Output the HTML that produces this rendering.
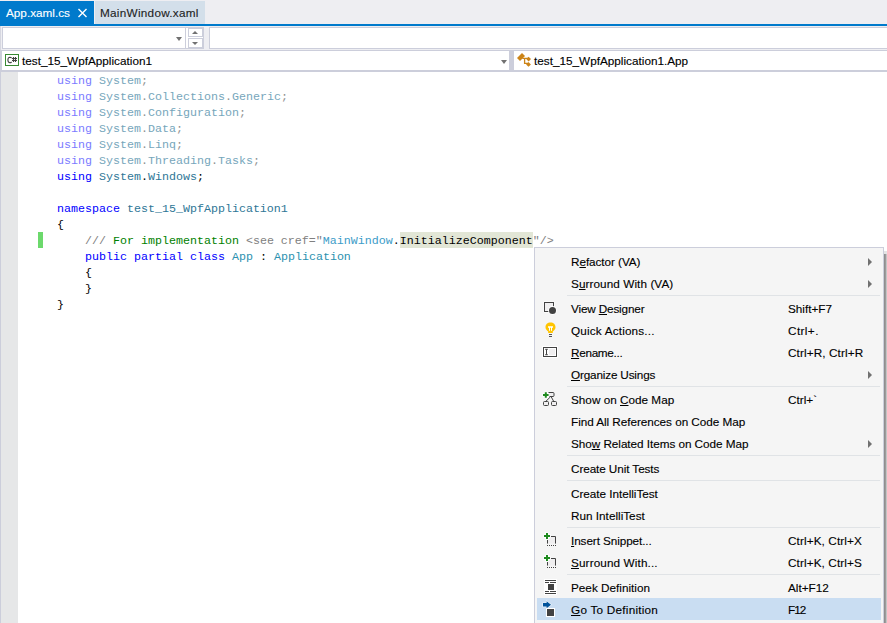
<!DOCTYPE html>
<html><head><meta charset="utf-8">
<style>
html,body{margin:0;padding:0;}
body{width:887px;height:623px;overflow:hidden;position:relative;background:#fff;font-family:"Liberation Sans",sans-serif;}
.a{position:absolute;}
.ui{font-family:"Liberation Sans",sans-serif;font-size:11.76px;white-space:pre;color:#000;-webkit-text-stroke:0.12px currentColor;}
#code{position:absolute;left:57px;top:73px;font-family:"Liberation Mono",monospace;font-size:11.67px;line-height:16px;color:#000;}
#code div{height:16px;white-space:pre;}
.kw{color:#0000ff}.kwf{color:#7b7bff}.ns{color:#2e7696}.nsf{color:#76a6bb}.pf{color:#8f8f8f}
.cg{color:#808080}.cm{color:#008000}.ty{color:#2b91af}.cr{color:#3c9cc8}
.hl{}
.mi{position:absolute;left:571px;height:22px;}
.mt{position:absolute;top:3px;left:0;font-size:11.76px;white-space:pre;color:#000;}
.sc{position:absolute;left:788px;}
.sep{position:absolute;left:567px;width:313px;height:1px;background:#e0e3e6;}
.arr{position:absolute;left:868px;width:0;height:0;border-top:4px solid transparent;border-bottom:4px solid transparent;border-left:4.5px solid #717171;}
u{text-decoration:underline;text-decoration-thickness:1px;text-underline-offset:1px;}
</style></head><body>
<!-- tab strip -->
<div class="a" style="left:0;top:0;width:887px;height:24px;background:#eeeef2"></div>
<div class="a" style="left:0;top:1px;width:94px;height:23px;background:#007acc"></div>
<div class="a ui" style="left:6px;top:6px;color:#fff">App.xaml.cs</div>
<svg class="a" style="left:77px;top:8px" width="11" height="10" viewBox="0 0 11 10"><path d="M1.5 1 L9.5 9 M9.5 1 L1.5 9" stroke="#fff" stroke-width="1.4"/></svg>
<div class="a" style="left:95px;top:1px;width:110px;height:23px;background:#d3dfea"></div>
<div class="a ui" style="left:100px;top:6px;color:#1e1e1e;letter-spacing:0.27px">MainWindow.xaml</div>
<div class="a" style="left:0;top:24px;width:887px;height:2px;background:#007acc"></div>
<!-- toolbar row -->
<div class="a" style="left:0;top:26px;width:887px;height:24px;background:#eeeef2"></div>
<div class="a" style="left:2px;top:27px;width:200px;height:20px;border:1px solid #cccedb;background:#fff"></div>
<div class="a" style="left:185px;top:28px;width:1px;height:20px;background:#cccedb"></div>
<div class="a" style="left:176px;top:37px;width:0;height:0;border-left:3.5px solid transparent;border-right:3.5px solid transparent;border-top:4px solid #717171"></div>
<div class="a" style="left:188px;top:27px;width:16px;height:22px;background:#cccedb"></div>
<div class="a" style="left:189px;top:29px;width:13px;height:7px;background:#fff"></div>
<div class="a" style="left:188px;top:37px;width:15px;height:1px;background:#fff"></div>
<div class="a" style="left:189px;top:39px;width:13px;height:8px;background:#fff"></div>
<div class="a" style="left:192px;top:31px;width:0;height:0;border-left:3px solid transparent;border-right:3px solid transparent;border-bottom:3px solid #717171"></div>
<div class="a" style="left:192px;top:42px;width:0;height:0;border-left:3px solid transparent;border-right:3px solid transparent;border-top:3px solid #717171"></div>
<div class="a" style="left:209px;top:27px;width:700px;height:20px;border:1px solid #cccedb;background:#fff"></div>
<div class="a" style="left:0;top:26px;width:1px;height:46px;background:#d6d7e0"></div>
<!-- nav bar -->
<div class="a" style="left:0;top:50px;width:887px;height:22px;background:#cccedb"></div>
<div class="a" style="left:2px;top:51px;width:507px;height:19px;background:#fff"></div>
<div class="a" style="left:514px;top:51px;width:373px;height:19px;background:#fff"></div>
<div class="a" style="left:501px;top:60px;width:0;height:0;border-left:3.5px solid transparent;border-right:3.5px solid transparent;border-top:4px solid #717171"></div>
<svg class="a" style="left:5px;top:54px" width="14" height="12" viewBox="0 0 14 12"><rect x="0.5" y="0.5" width="13" height="11" fill="#fff" stroke="#388a34"/><path d="M6.6 4 Q5.9 3.3 4.9 3.3 Q2.9 3.4 2.9 6 Q2.9 8.6 4.9 8.7 Q5.9 8.7 6.6 8" stroke="#424242" stroke-width="1.1" fill="none"/><path d="M8.5 3 V8 M10.5 3 V8 M7 4.5 H12 M7 6.5 H12" stroke="#424242" stroke-width="1.1" fill="none"/></svg>
<div class="a ui" style="left:22px;top:54px">test_15_WpfApplication1</div>
<svg class="a" style="left:514px;top:51px" width="22" height="19" viewBox="0 0 22 19"><path d="M3 7 L8 2 L11 5 L6 10 Z" fill="#cc8418"/><path d="M8.3 7.3 H14 M10.6 7 V12.4 H14" stroke="#cc8418" stroke-width="1.3" fill="none"/><path d="M12.2 8.1 L14.6 5.8 L17 8.1 L14.6 10.5 Z M12.1 13.4 L14.5 11.1 L16.9 13.4 L14.5 15.8 Z" fill="#cc8418"/></svg>
<div class="a ui" style="left:534px;top:54px">test_15_WpfApplication1.App</div>
<!-- editor -->
<div class="a" style="left:0;top:72px;width:1px;height:551px;background:#cccedb"></div>
<div class="a" style="left:1px;top:72px;width:17px;height:551px;background:#e6e7e8"></div>
<div class="a" style="left:38px;top:232px;width:5px;height:16px;background:#6cd96c"></div>
<div class="a" style="left:400px;top:232px;width:133px;height:16px;background:#e2e6d6"></div>
<div id="code">
<div><span class="kwf">using</span> <span class="nsf">System</span><span class="pf">;</span></div>
<div><span class="kwf">using</span> <span class="nsf">System</span><span class="pf">.</span><span class="nsf">Collections</span><span class="pf">.</span><span class="nsf">Generic</span><span class="pf">;</span></div>
<div><span class="kwf">using</span> <span class="nsf">System</span><span class="pf">.</span><span class="nsf">Configuration</span><span class="pf">;</span></div>
<div><span class="kwf">using</span> <span class="nsf">System</span><span class="pf">.</span><span class="nsf">Data</span><span class="pf">;</span></div>
<div><span class="kwf">using</span> <span class="nsf">System</span><span class="pf">.</span><span class="nsf">Linq</span><span class="pf">;</span></div>
<div><span class="kwf">using</span> <span class="nsf">System</span><span class="pf">.</span><span class="nsf">Threading</span><span class="pf">.</span><span class="nsf">Tasks</span><span class="pf">;</span></div>
<div><span class="kw">using</span> <span class="ns">System</span>.<span class="ns">Windows</span>;</div>
<div></div>
<div><span class="kw">namespace</span> <span class="ns">test_15_WpfApplication1</span></div>
<div>{</div>
<div>    <span class="cg">///</span><span class="cm"> For implementation </span><span class="cg">&lt;see cref="</span><span class="cr">MainWindow</span>.<span class="hl">InitializeComponent</span><span class="cg">"/&gt;</span></div>
<div>    <span class="kw">public</span> <span class="kw">partial</span> <span class="kw">class</span> <span class="ty">App</span> : <span class="ty">Application</span></div>
<div>    {</div>
<div>    }</div>
<div>}</div>
</div>
<!-- context menu -->
<div class="a" style="left:884px;top:254px;width:1px;height:369px;background:#8f8f8f"></div><div class="a" style="left:885px;top:254px;width:1px;height:369px;background:#9c9c9c"></div><div class="a" style="left:886px;top:254px;width:1px;height:369px;background:#c4c4c4"></div><div class="a" style="left:884px;top:251px;width:3px;height:3px;background:#e4e4e4"></div>
<div class="a" style="left:534px;top:247px;width:348px;height:380px;border:1px solid #cccedb;background:#f5f5f5"></div>
<div class="a" style="left:537px;top:598px;width:344px;height:22px;background:#c9ddf2"></div>
<svg class="a" style="left:0;top:0;pointer-events:none" width="887" height="623" viewBox="0 0 887 623" shape-rendering="auto">
<!-- view designer -->
<rect x="543.5" y="301.5" width="11" height="11" fill="#fff"/>
<rect x="544.5" y="302.5" width="9" height="9" fill="#f0eff0" stroke="#424242" stroke-width="1"/>
<rect x="545" y="303" width="8" height="8" fill="none" stroke="#fff" stroke-width="1" transform="translate(0.5 0.5) scale(1)" opacity="0"/>
<circle cx="552.5" cy="310.5" r="4.4" fill="#fff"/>
<circle cx="552.5" cy="310.5" r="3.5" fill="#424242"/>
<!-- bulb -->
<path d="M550.5 322.5 C553.5 322.5 555.5 324.5 555.5 327.3 C555.5 329.3 554 330.6 552.8 331.6 L552.8 333 L548.2 333 L548.2 331.6 C547 330.6 545.5 329.3 545.5 327.3 C545.5 324.5 547.5 322.5 550.5 322.5 Z" fill="#ffc400"/>
<path d="M548 326.3 H553 V327.7 H552 V330.8 H551 V327.7 H550 V330.8 H549 V327.7 H548 Z" fill="#fff"/>
<rect x="549" y="334" width="3" height="1" fill="#555"/>
<rect x="549" y="336" width="3" height="1" fill="#555"/>
<!-- rename -->
<rect x="542" y="346" width="16" height="12" fill="#fff"/>
<rect x="543.5" y="347.5" width="13" height="9" fill="#fff" stroke="#424242" stroke-width="1"/>
<rect x="549" y="349" width="6" height="6" fill="#efeeef"/>
<path d="M546.5 349.5 V354.5 M545.2 349.3 H547.8 M545.2 354.7 H547.8" stroke="#424242" stroke-width="1" fill="none"/>
<!-- code map -->
<path d="M548.5 392.5 H553 Q554 392.5 554 393.5 V395.5 Q554 396.5 553 396.5 H549.5" stroke="#424242" stroke-width="1" fill="#f0eff0"/>
<path d="M550.3 397 L546 401.2 M551.3 397 L553.6 401.2" stroke="#424242" stroke-width="1"/>
<rect x="543.5" y="401.5" width="5" height="4" rx="1" fill="#f0eff0" stroke="#424242" stroke-width="1"/>
<rect x="551.5" y="401.5" width="5" height="4" rx="1" fill="#f0eff0" stroke="#424242" stroke-width="1"/>
<path d="M542.5 395 H549 M545.8 391.8 V398.2" stroke="#fff" stroke-width="3.6"/>
<path d="M543 395 H548.6 M545.8 392.2 V397.8" stroke="#1e8a1e" stroke-width="2"/>
<!-- snippet x2 -->
<g id="snip">
<rect x="547.6" y="537" width="7.6" height="6.5" fill="#efeeef"/>
<path d="M551 536.5 H555.5 V543.6" stroke="#424242" stroke-width="1" fill="none"/>
<path d="M547.5 540 V543.6" stroke="#424242" stroke-width="1" fill="none"/>
<path d="M547 545.5 H556" stroke="#424242" stroke-width="1" stroke-dasharray="1 1" fill="none"/>
<path d="M543.5 536 H550.5 M547 532.5 V539.5" stroke="#fff" stroke-width="3.6"/>
<path d="M544 536 H550 M547 533 V539" stroke="#1e8a1e" stroke-width="2"/>
</g>
<use href="#snip" transform="translate(0 22)"/>
<!-- peek -->
<rect x="544" y="579" width="13" height="16" fill="#fff"/>
<rect x="545" y="580" width="11" height="1" fill="#424242"/>
<rect x="545" y="582" width="4" height="1" fill="#424242"/>
<rect x="550" y="582" width="6" height="1" fill="#424242"/>
<rect x="548" y="584" width="6" height="6" fill="#424242"/>
<rect x="545" y="591" width="4" height="1" fill="#424242"/>
<rect x="550" y="591" width="6" height="1" fill="#424242"/>
<rect x="545" y="593" width="11" height="1" fill="#424242"/>
<!-- goto -->
<rect x="546" y="608" width="9" height="9" fill="#fff"/>
<rect x="547" y="609" width="7" height="7" fill="#424242"/>
<path d="M543 603 H546.6 V601.3 L551 604.8 L546.6 608.3 V606.6 H543 Z" fill="#fff" stroke="#fff" stroke-width="1.2" opacity="0.7"/><path d="M543 603 H546.6 V601.3 L551 604.8 L546.6 608.3 V606.6 H543 Z" fill="#00539c"/>
</svg>
<div id="menu">
<div class="ui a mt" style="left:571px;top:255px;letter-spacing:-0.067px">R<u>e</u>factor (VA)</div>
<div class="arr" style="top:258px"></div>
<div class="ui a mt" style="left:571px;top:277px;letter-spacing:0.071px">S<u>u</u>rround With (VA)</div>
<div class="arr" style="top:280px"></div>
<div class="sep" style="top:295px"></div>
<div class="ui a mt" style="left:571px;top:302px;letter-spacing:-0.167px">View <u>D</u>esigner</div>
<div class="ui a mt" style="left:788px;top:302px">Shift+F7</div>
<!--icon designer 297-->
<div class="ui a mt" style="left:571px;top:324px;letter-spacing:0.167px">Quick Actions...</div>
<div class="ui a mt" style="left:788px;top:324px;letter-spacing:0.4px">Ctrl+.</div>
<!--icon bulb 319-->
<div class="ui a mt" style="left:571px;top:346px;letter-spacing:-0.312px"><u>R</u>ename...</div>
<div class="ui a mt" style="left:788px;top:346px;letter-spacing:0.108px">Ctrl+R, Ctrl+R</div>
<!--icon rename 341-->
<div class="ui a mt" style="left:571px;top:368px;letter-spacing:-0.179px"><u>O</u>rganize Usings</div>
<div class="arr" style="top:371px"></div>
<div class="sep" style="top:386px"></div>
<div class="ui a mt" style="left:571px;top:393px">Show on <u>C</u>ode Map</div>
<div class="ui a mt" style="left:788px;top:393px">Ctrl+`</div>
<!--icon codemap 388-->
<div class="ui a mt" style="left:571px;top:415px;letter-spacing:-0.050px">Find All References on Code Map</div>
<div class="ui a mt" style="left:571px;top:437px;letter-spacing:-0.052px">Sho<u>w</u> Related Items on Code Map</div>
<div class="arr" style="top:440px"></div>
<div class="sep" style="top:455px"></div>
<div class="ui a mt" style="left:571px;top:462px;letter-spacing:-0.094px">Create Unit Tests</div>
<div class="sep" style="top:480px"></div>
<div class="ui a mt" style="left:571px;top:487px;letter-spacing:-0.041px">Create IntelliTest</div>
<div class="ui a mt" style="left:571px;top:509px">Run IntelliTest</div>
<div class="sep" style="top:527px"></div>
<div class="ui a mt" style="left:571px;top:534px;letter-spacing:-0.094px"><u>I</u>nsert Snippet...</div>
<div class="ui a mt" style="left:788px;top:534px;letter-spacing:0.108px">Ctrl+K, Ctrl+X</div>
<!--icon snippet 529-->
<div class="ui a mt" style="left:571px;top:556px;letter-spacing:0.113px"><u>S</u>urround With...</div>
<div class="ui a mt" style="left:788px;top:556px;letter-spacing:0.108px">Ctrl+K, Ctrl+S</div>
<!--icon snippet 551-->
<div class="sep" style="top:574px"></div>
<div class="ui a mt" style="left:571px;top:581px">Peek Definition</div>
<div class="ui a mt" style="left:788px;top:581px">Alt+F12</div>
<!--icon peek 576-->
<div class="ui a mt" style="left:571px;top:603px;letter-spacing:0.233px"><u>G</u>o To Definition</div>
<div class="ui a mt" style="left:788px;top:603px;letter-spacing:-1.000px">F12</div>
<!--icon goto 598-->
</div>
</body></html>
